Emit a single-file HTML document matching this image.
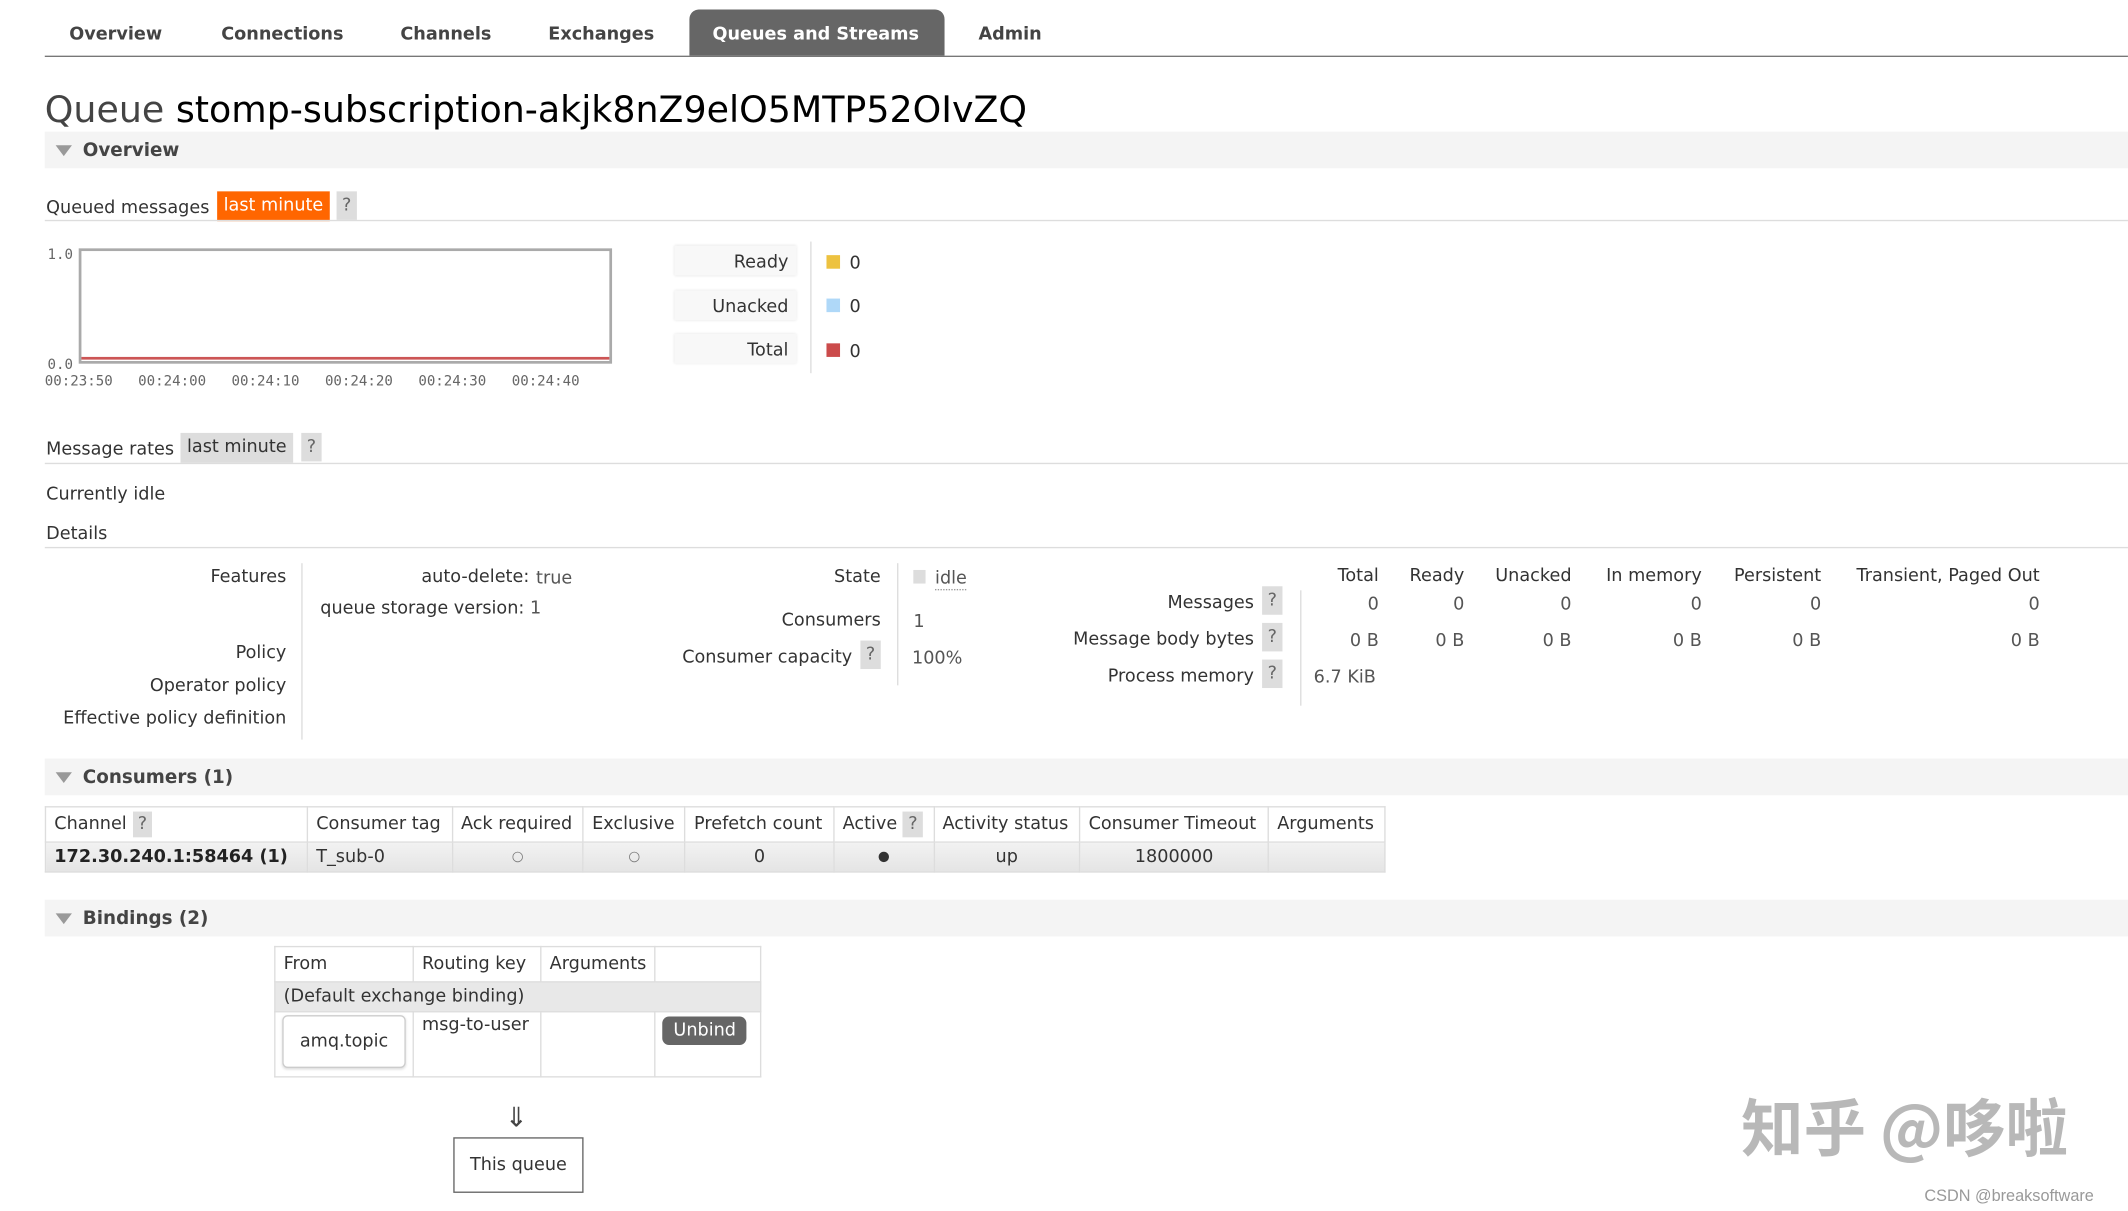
<!DOCTYPE html>
<html><head><meta charset="utf-8">
<style>
html,body{margin:0;padding:0;background:#fff;width:2128px;height:1210px;overflow:hidden}
#w{position:absolute;left:0;top:0;width:1568px;height:892px;transform:scale(1.3571);transform-origin:0 0;font-family:"DejaVu Sans","Liberation Sans",sans-serif;font-size:13px;color:#333}
.a{position:absolute;white-space:nowrap;line-height:16px;transform:translateY(2px)}
.r{text-align:right}
.b{font-weight:bold}
.bar{position:absolute;left:33px;right:0;background:#f4f4f4;height:27px}
.tri{position:absolute;left:8px;top:10px;width:0;height:0;border-left:6px solid transparent;border-right:6px solid transparent;border-top:8px solid #999}
.bar span{position:absolute;left:28px;top:6px;font-weight:bold;font-size:13.5px;color:#444}
.hl{position:absolute;height:1px;background:#ddd}
.vl{position:absolute;width:1px;background:#ddd}
.q{position:absolute;background:#ddd;color:#666;text-align:center;line-height:22px;height:21px;width:15px}
.lg{position:absolute;left:497px;width:90px;height:22px;background:#f8f8f8;box-shadow:0 0 2px #ddd;text-align:right}
.lg span{position:absolute;right:6px;top:5px}
table{border-collapse:collapse;position:absolute;font-size:13px}
td{border:1px solid #ddd;padding:0 6px;white-space:nowrap;color:#333}
</style></head><body><div id="w">
<div class="a b" style="left:51px;top:16px;color:#444">Overview</div>
<div class="a b" style="left:163px;top:16px;color:#444">Connections</div>
<div class="a b" style="left:295px;top:16px;color:#444">Channels</div>
<div class="a b" style="left:404px;top:16px;color:#444">Exchanges</div>
<div style="position:absolute;left:508px;top:7px;width:188px;height:34px;background:#666;border-radius:7px 7px 0 0"></div>
<div class="a b" style="left:525px;top:16px;color:#fff">Queues and Streams</div>
<div class="a b" style="left:721px;top:16px;color:#444">Admin</div>
<div style="position:absolute;left:33px;right:0;top:41px;height:1px;background:#777"></div>
<div class="a" style="left:33px;top:64px;font-size:26.8px;line-height:32px;color:#000"><span style="color:#444">Queue</span> stomp-subscription-akjk8nZ9elO5MTP52OIvZQ</div>
<div class="bar" style="top:97px"><div class="tri"></div><span>Overview</span></div>
<div class="a" style="left:34px;top:144px">Queued messages</div>
<div class="a" style="left:160px;top:139px;width:83px;height:22px;background:#f60;color:#fff;line-height:22px;text-align:center">last minute</div>
<div class="q" style="left:248px;top:141px">?</div>
<div class="hl" style="left:33px;right:0;top:162px"></div>
<div style="position:absolute;left:58px;top:183px;width:389px;height:81px;border:2px solid #aaa;background:#fff"></div>
<div style="position:absolute;left:60px;top:263px;width:389px;height:2px;background:#c55"></div>
<div class="a" style="left:35px;top:178px;font-size:10.4px;color:#666;font-family:'DejaVu Sans Mono','Liberation Mono',monospace">1.0</div>
<div class="a" style="left:35px;top:259px;font-size:10.4px;color:#666;font-family:'DejaVu Sans Mono','Liberation Mono',monospace">0.0</div>
<div class="a" style="left:33px;top:271px;font-size:10.4px;color:#666;font-family:'DejaVu Sans Mono','Liberation Mono',monospace">00:23:50&nbsp;&nbsp;&nbsp;00:24:00&nbsp;&nbsp;&nbsp;00:24:10&nbsp;&nbsp;&nbsp;00:24:20&nbsp;&nbsp;&nbsp;00:24:30&nbsp;&nbsp;&nbsp;00:24:40</div>
<div class="lg" style="top:181px"><span>Ready</span></div>
<div class="lg" style="top:214px"><span>Unacked</span></div>
<div class="lg" style="top:246px"><span>Total</span></div>
<div class="vl" style="left:597px;top:178px;height:97px"></div>
<div style="position:absolute;left:609px;top:188px;width:10px;height:10px;background:#edc240"></div>
<div style="position:absolute;left:609px;top:220px;width:10px;height:10px;background:#afd8f8"></div>
<div style="position:absolute;left:609px;top:253px;width:10px;height:10px;background:#cb4b4b"></div>
<div class="a" style="left:626px;top:185px">0</div>
<div class="a" style="left:626px;top:217px">0</div>
<div class="a" style="left:626px;top:250px">0</div>
<div class="a" style="left:34px;top:322px">Message rates</div>
<div class="a" style="left:133px;top:317px;width:83px;height:22px;background:#ddd;line-height:22px;text-align:center">last minute</div>
<div class="q" style="left:222px;top:319px">?</div>
<div class="hl" style="left:33px;right:0;top:341px"></div>
<div class="a" style="left:34px;top:355px">Currently idle</div>
<div class="a" style="left:34px;top:384px">Details</div>
<div class="hl" style="left:33px;right:0;top:403px"></div>
<div class="a r" style="right:1357px;top:416px">Features</div>
<div class="a r" style="right:1357px;top:472px">Policy</div>
<div class="a r" style="right:1357px;top:496px">Operator policy</div>
<div class="a r" style="right:1357px;top:520px">Effective policy definition</div>
<div class="vl" style="left:222px;top:415px;height:130px"></div>
<div class="a r" style="right:1178px;top:416px">auto-delete:</div>
<div class="a" style="left:395px;top:417px;color:#555">true</div>
<div class="a" style="left:236px;top:439px">queue storage version: <span style="color:#555">1</span></div>
<div class="a r" style="right:919px;top:416px">State</div>
<div class="a r" style="right:919px;top:448px">Consumers</div>
<div class="a r" style="right:940px;top:475px">Consumer capacity</div>
<div class="q" style="left:634px;top:472px">?</div>
<div class="vl" style="left:661px;top:415px;height:90px"></div>
<div style="position:absolute;left:673px;top:420px;width:9px;height:10px;background:#ddd"></div>
<div class="a" style="left:689px;top:417px;color:#555;border-bottom:1px dotted #999;line-height:15px">idle</div>
<div class="a" style="left:673px;top:449px;color:#555">1</div>
<div class="a" style="left:672px;top:476px;color:#555">100%</div>
<div class="a r" style="right:552px;top:415px">Total</div>
<div class="a r" style="right:489px;top:415px">Ready</div>
<div class="a r" style="right:410px;top:415px">Unacked</div>
<div class="a r" style="right:314px;top:415px">In memory</div>
<div class="a r" style="right:226px;top:415px">Persistent</div>
<div class="a r" style="right:65px;top:415px">Transient, Paged Out</div>
<div class="a r" style="right:644px;top:435px">Messages</div>
<div class="q" style="left:930px;top:432px">?</div>
<div class="a r" style="right:644px;top:462px">Message body bytes</div>
<div class="q" style="left:930px;top:459px">?</div>
<div class="a r" style="right:644px;top:489px">Process memory</div>
<div class="q" style="left:930px;top:486px">?</div>
<div class="vl" style="left:958px;top:435px;height:85px"></div>
<div class="a r" style="right:552px;top:436px;color:#555">0</div>
<div class="a r" style="right:489px;top:436px;color:#555">0</div>
<div class="a r" style="right:410px;top:436px;color:#555">0</div>
<div class="a r" style="right:314px;top:436px;color:#555">0</div>
<div class="a r" style="right:226px;top:436px;color:#555">0</div>
<div class="a r" style="right:65px;top:436px;color:#555">0</div>
<div class="a r" style="right:552px;top:463px;color:#555">0 B</div>
<div class="a r" style="right:489px;top:463px;color:#555">0 B</div>
<div class="a r" style="right:410px;top:463px;color:#555">0 B</div>
<div class="a r" style="right:314px;top:463px;color:#555">0 B</div>
<div class="a r" style="right:226px;top:463px;color:#555">0 B</div>
<div class="a r" style="right:65px;top:463px;color:#555">0 B</div>
<div class="a" style="left:968px;top:490px;color:#555">6.7 KiB</div>
<div class="bar" style="top:559px"><div class="tri"></div><span>Consumers (1)</span></div>
<table style="left:33px;top:594px;width:988px">
<tr style="height:26px"><td style="width:180px">Channel <span style="background:#ddd;color:#666;padding:2px 4px">?</span></td><td>Consumer tag</td><td>Ack required</td><td>Exclusive</td><td>Prefetch count</td><td>Active <span style="background:#ddd;color:#666;padding:2px 4px">?</span></td><td>Activity status</td><td>Consumer Timeout</td><td>Arguments</td></tr>
<tr style="height:22px;background:linear-gradient(#f2f2f2,#e4e4e4)"><td class="b" style="color:#222">172.30.240.1:58464 (1)</td><td>T_sub-0</td><td style="text-align:center;color:#777;font-size:10px">○</td><td style="text-align:center;color:#777;font-size:10px">○</td><td style="text-align:center">0</td><td style="text-align:center;font-size:10px">●</td><td style="text-align:center">up</td><td style="text-align:center">1800000</td><td></td></tr>
</table>
<div class="bar" style="top:663px"><div class="tri"></div><span>Bindings (2)</span></div>
<table style="left:202px;top:697px;width:359px">
<tr style="height:26px"><td style="width:89px">From</td><td style="width:81px">Routing key</td><td style="width:71px">Arguments</td><td></td></tr>
<tr style="height:22px;background:#e8e8e8"><td colspan="4">(Default exchange binding)</td></tr>
<tr style="height:48px;vertical-align:top"><td style="padding:2px 5px"><div style="border:1px solid #ccc;border-radius:4px;height:37px;line-height:37px;text-align:center;box-shadow:0 1px 2px #ddd">amq.topic</div></td><td style="padding-top:2px">msg-to-user</td><td></td><td style="padding:3px 5px"><div style="background:#666;color:#fff;border-radius:5px;height:21px;line-height:21px;text-align:center;width:62px">Unbind</div></td></tr>
</table>
<div class="a" style="left:372px;top:810px;font-size:20px;line-height:22px;color:#444">⇓</div>
<div style="position:absolute;left:334px;top:838px;width:94px;height:39px;border:1px solid #666;text-align:center;line-height:39px">This queue</div>
<div class="a" style="left:1283px;top:798px;font-size:46px;line-height:58px;color:#b8b8b8;font-family:'Noto Sans CJK SC','WenQuanYi Zen Hei',sans-serif;font-weight:bold">知乎 @哆啦</div>
<div class="a" style="left:1418px;top:871px;font-size:12px;color:#999;font-family:'Liberation Sans',sans-serif">CSDN @breaksoftware</div>
</div></body></html>
